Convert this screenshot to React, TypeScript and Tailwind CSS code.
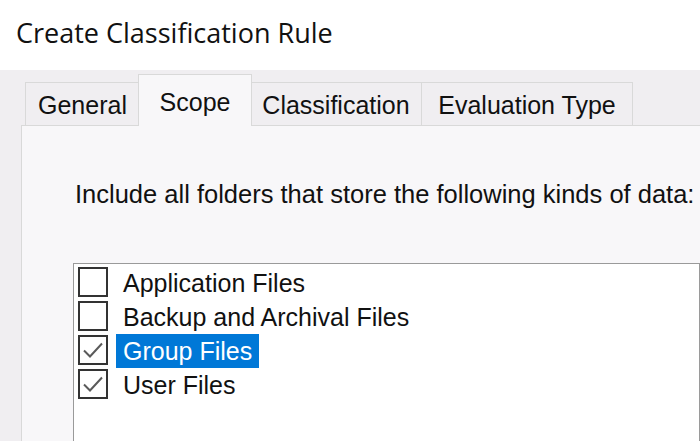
const LIST_ITEMS = [
  { label: "Application Files", checked: false, selected: false },
  { label: "Backup and Archival Files", checked: false, selected: false },
  { label: "Group Files", checked: true, selected: true },
  { label: "User Files", checked: true, selected: false },
];

function CheckBox({ checked }: { checked: boolean }) {
  return (
    <span className="mt-[1px] flex h-[30px] w-[30px] shrink-0 items-center justify-center border-2 border-[#333333] bg-white">
      {checked ? (
        <svg width="26" height="26" viewBox="0 0 26 26" fill="none" aria-hidden="true">
          <path d="M4 13.5 L10 19.5 L22 6.5" stroke="#5a5a5a" strokeWidth="2" strokeLinejoin="miter" />
        </svg>
      ) : null}
    </span>
  );
}

function Tab({ label, width, active, extra }: { label: string; width: string; active?: boolean; extra?: string }) {
  if (active) {
    return (
      <div
        className={`relative z-10 -mb-px h-[52px] ${width} border-x border-t border-[#d9d9d9] bg-[#f8f7f9] pt-[12px] text-center leading-[30px] ${extra ?? ""}`}
      >
        {label}
      </div>
    );
  }
  return (
    <div
      className={`h-[43px] ${width} border-x border-t border-[#d9d9d9] bg-[#f0eef1] pt-[7px] text-center leading-[30px] ${extra ?? ""}`}
    >
      {label}
    </div>
  );
}

export default function App() {
  return (
    <div className="h-[441px] w-[700px] overflow-hidden bg-[#f0eef1] text-[#111111]">
      <div className="h-[70px] bg-white pl-[16px] pt-[15px] font-['Open_Sans',sans-serif] text-[27px] leading-[36px] text-[#111111]">
        Create Classification Rule
      </div>

      <div className="ml-[21px] mt-[4px] font-['Liberation_Sans',Arial,sans-serif] text-[25px]">
        <div className="flex h-[51px] items-end pl-[4px]">
          <Tab label="General" width="w-[115px]" />
          <Tab label="Scope" width="w-[114px]" active extra="-ml-[2px]" />
          <Tab label="Classification" width="w-[172px]" extra="-ml-[2px]" />
          <Tab label="Evaluation Type" width="w-[211px]" extra="border-l-0" />
        </div>

        <div className="h-[320px] border-l border-t border-[#d9d9d9] bg-[#f8f7f9] pt-[53px]">
          <p className="ml-[53px] whitespace-nowrap text-[25.5px] leading-[30px]">
            Include all folders that store the following kinds of data:
          </p>

          <div className="ml-[51px] mt-[54px] h-[260px] border border-[#9a9a9a] bg-white pl-[4px] pt-[2px]">
            {LIST_ITEMS.map((item) => (
              <div key={item.label} className="flex h-[34px] items-start">
                <CheckBox checked={item.checked} />
                <span
                  className={`ml-[8px] h-[34px] whitespace-nowrap px-[7px] leading-[34px] ${
                    item.selected ? "bg-[#0078d7] text-white" : ""
                  }`}
                >
                  {item.label}
                </span>
              </div>
            ))}
          </div>
        </div>
      </div>
    </div>
  );
}
